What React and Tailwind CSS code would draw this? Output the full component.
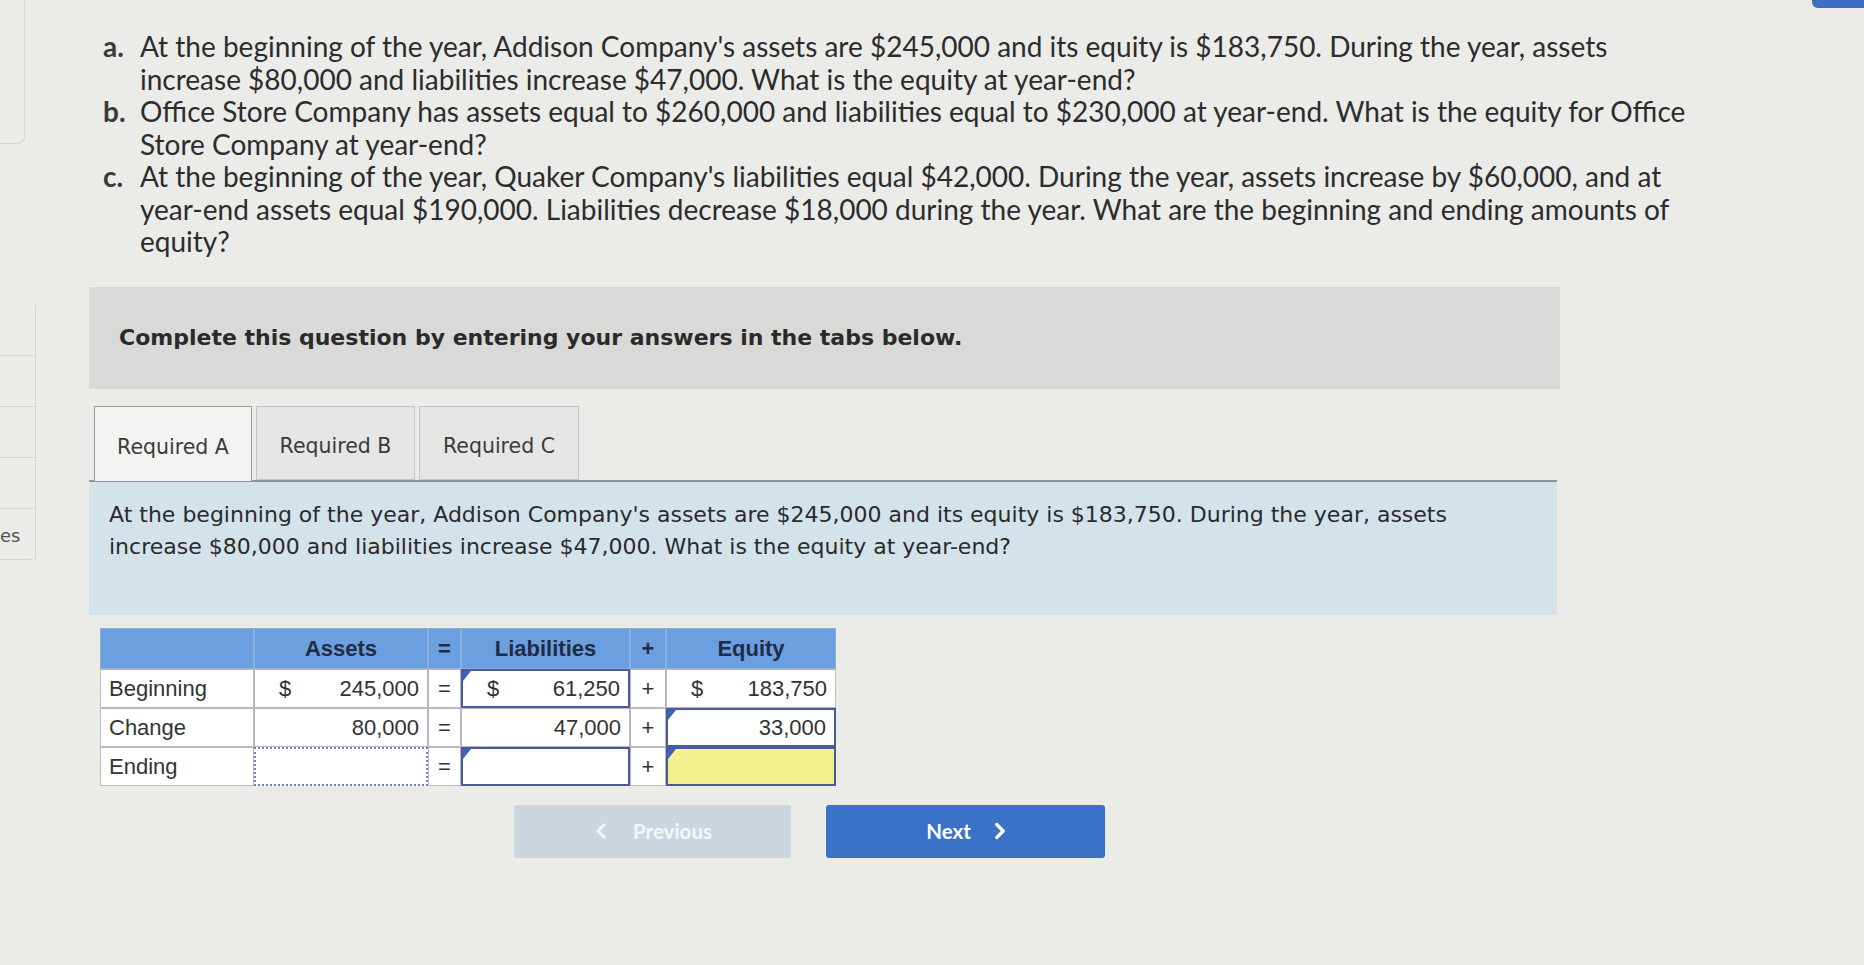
import { ChevronLeft, ChevronRight } from "lucide-react";

const questions = [
  {
    mark: "a.",
    lines: [
      "At the beginning of the year, Addison Company's assets are $245,000 and its equity is $183,750. During the year, assets",
      "increase $80,000 and liabilities increase $47,000. What is the equity at year-end?",
    ],
  },
  {
    mark: "b.",
    lines: [
      "Office Store Company has assets equal to $260,000 and liabilities equal to $230,000 at year-end. What is the equity for Office",
      "Store Company at year-end?",
    ],
  },
  {
    mark: "c.",
    lines: [
      "At the beginning of the year, Quaker Company's liabilities equal $42,000. During the year, assets increase by $60,000, and at",
      "year-end assets equal $190,000. Liabilities decrease $18,000 during the year. What are the beginning and ending amounts of",
      "equity?",
    ],
  },
];

const Flag = () => (
  <span className="absolute left-0 top-0 h-0 w-0 border-t-[10px] border-r-[8px] border-t-[#3d63b8] border-r-transparent" />
);

const Cell = ({ children, className = "", bg = "bg-white" }) => (
  <div className={`relative flex items-center border px-2 ${bg} ${className}`}>
    {children}
  </div>
);

const Money = ({ dollar, value }) => (
  <div className="flex w-full items-center justify-between">
    <span className="pl-4">{dollar ? "$" : ""}</span>
    <span>{value}</span>
  </div>
);

const plain = "border-[#b9b9bd]";
const input = "border-2 border-[#4a5a9c]";

export default function App() {
  return (
    <div className="relative flex h-[965px] w-[1864px] overflow-hidden bg-[#ebebe8] text-[#2c2c2e]">
      {/* cut off sidebar */}
      <div className="flex w-[40px] shrink-0 flex-col">
        <div className="h-[144px] w-[25px] rounded-br-lg border-r border-b border-[#d4d4d2]" />
        <div className="mt-[161px] flex w-[36px] flex-col border-r border-[#d4d4d2] font-['DejaVu_Sans',sans-serif] text-[18px] text-[#555]">
          <div className="h-[51px] border-b border-[#d4d4d2]" />
          <div className="h-[51px] border-b border-[#d4d4d2]" />
          <div className="h-[51px] border-b border-[#d4d4d2]" />
          <div className="h-[51px] border-b border-[#d4d4d2]" />
          <div className="flex h-[51px] items-center rounded-br-md border-b border-[#d4d4d2] pt-1 leading-none">
            es
          </div>
        </div>
      </div>

      <div className="ml-[49px] flex w-[1471px] flex-col">
        <ol className="mt-[30px] flex flex-col font-['Lato',sans-serif] text-[28px] leading-[32.5px]">
          {questions.map((q) => (
            <li key={q.mark} className="flex">
              <span className="w-[51px] shrink-0 pl-[14px] font-bold text-[#3a3a3c]">{q.mark}</span>
              <span className="whitespace-nowrap">
                {q.lines.map((l, i) => (
                  <span key={i} className="block">
                    {l}
                  </span>
                ))}
              </span>
            </li>
          ))}
        </ol>

        <div className="mt-[29px] h-[102px] bg-[#d9d9d7] pl-[30px] pt-[34px] font-['DejaVu_Sans',sans-serif] text-[22px] font-bold text-[#2a2a2c]">
          Complete this question by entering your answers in the tabs below.
        </div>

        <div className="mt-[17px] flex gap-[4px] pl-[5px] font-['DejaVu_Sans',sans-serif] text-[20.5px] text-[#3a3a3c]">
          <div className="relative z-10 -mb-px flex h-[75px] w-[158px] items-center justify-center border border-b-0 border-[#9a9a9a] bg-[#f3f3f1] pt-2">
            Required A
          </div>
          <div className="flex h-[74px] w-[159px] items-center justify-center border border-[#c4c4c2] bg-[#e6e6e4] pt-2">
            Required B
          </div>
          <div className="flex h-[74px] w-[160px] items-center justify-center border border-[#c4c4c2] bg-[#e6e6e4] pt-2">
            Required C
          </div>
        </div>

        <div className="h-[135px] w-[1468px] border-t-2 border-[#8f9599] bg-[#d4e3ea] pl-[20px] pt-[17px] font-['DejaVu_Sans',sans-serif] text-[22px] leading-[32px] text-[#2a2a2c]">
          <p className="whitespace-nowrap">
            At the beginning of the year, Addison Company's assets are $245,000 and its equity is $183,750. During the year, assets
          </p>
          <p>increase $80,000 and liabilities increase $47,000. What is the equity at year-end?</p>
        </div>

        <div className="ml-[11px] mt-[13px] grid w-[736px] grid-cols-[154px_174px_33px_169px_36px_170px] grid-rows-[41px_39px_39px_39px] font-['Liberation_Sans',Arial,sans-serif] text-[22px] text-[#333]">
          <div className="border border-[#8fb0dc] bg-[#6c9fe0]" />
          <div className="flex items-center justify-center border border-[#8fb0dc] bg-[#6c9fe0] font-bold text-[#1f2c44]">Assets</div>
          <div className="flex items-center justify-center border border-[#8fb0dc] bg-[#6c9fe0] font-bold text-[#1f2c44]">=</div>
          <div className="flex items-center justify-center border border-[#8fb0dc] bg-[#6c9fe0] font-bold text-[#1f2c44]">Liabilities</div>
          <div className="flex items-center justify-center border border-[#8fb0dc] bg-[#6c9fe0] font-bold text-[#1f2c44]">+</div>
          <div className="flex items-center justify-center border border-[#8fb0dc] bg-[#6c9fe0] font-bold text-[#1f2c44]">Equity</div>

          <Cell className={plain}>Beginning</Cell>
          <Cell className={plain}><Money dollar value="245,000" /></Cell>
          <Cell className={`${plain} justify-center px-0`}>=</Cell>
          <Cell className={input}><Flag /><Money dollar value="61,250" /></Cell>
          <Cell className={`${plain} justify-center px-0`}>+</Cell>
          <Cell className={plain}><Money dollar value="183,750" /></Cell>

          <Cell className={plain}>Change</Cell>
          <Cell className={plain}><Money value="80,000" /></Cell>
          <Cell className={`${plain} justify-center px-0`}>=</Cell>
          <Cell className={plain}><Money value="47,000" /></Cell>
          <Cell className={`${plain} justify-center px-0`}>+</Cell>
          <Cell className={input}><Flag /><Money value="33,000" /></Cell>

          <Cell className={plain}>Ending</Cell>
          <Cell className="border-2 border-dotted border-[#6b82c4]" />
          <Cell className={`${plain} justify-center px-0`}>=</Cell>
          <Cell className={input}><Flag /></Cell>
          <Cell className={`${plain} justify-center px-0`}>+</Cell>
          <Cell className={input} bg="bg-[#f4f08e]"><Flag /></Cell>
        </div>

        <div className="ml-[425px] mt-[19px] flex gap-[35px] font-['Lato',sans-serif] text-[20.5px] font-bold text-white">
          <button className="flex h-[53px] w-[277px] items-center justify-center gap-5 rounded-[3px] bg-[#cdd6de] pr-1 text-[#f4f6f8]">
            <ChevronLeft size={24} strokeWidth={3} />
            Previous
          </button>
          <button className="flex h-[53px] w-[279px] items-center justify-center gap-4 rounded-[3px] bg-[#3a72c8] pl-2">
            Next
            <ChevronRight size={26} strokeWidth={3} />
          </button>
        </div>
      </div>

      <div className="absolute right-0 top-0 h-[8px] w-[52px] rounded-bl-md border-b-2 border-l-2 border-dotted border-[#4a66b0] bg-[#3a6fc4]" />
    </div>
  );
}
